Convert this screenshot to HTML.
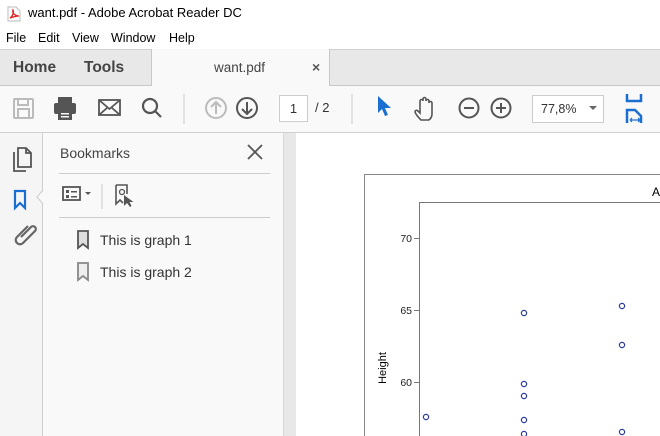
<!DOCTYPE html>
<html><head><style>
*{margin:0;padding:0;box-sizing:border-box}
html,body{width:660px;height:436px;overflow:hidden}
body{font-family:"Liberation Sans",sans-serif;background:#fff;position:relative}
.a{position:absolute}
</style></head><body>
<div class="a" style="left:0;top:0;width:660px;height:28px;background:#fff"></div>
<svg class="a" style="left:7px;top:6px" width="14" height="16"><path d="M1 1h8l4 4v10H1z" fill="#fff" stroke="#bbb"/><path d="M3 12c3-2 4-6 3-8c-1 3 2 6 6 6c-3 0-6 1-9 2z" fill="none" stroke="#d22" stroke-width="1.3"/></svg>
<div class="a" style="left:28px;top:5px;font-size:13px;color:#000">want.pdf - Adobe Acrobat Reader DC</div>
<div class="a" style="left:6px;top:31px;font-size:12.5px;color:#000">File</div>
<div class="a" style="left:38px;top:31px;font-size:12.5px">Edit</div>
<div class="a" style="left:72px;top:31px;font-size:12.5px">View</div>
<div class="a" style="left:111px;top:31px;font-size:12.5px">Window</div>
<div class="a" style="left:169px;top:31px;font-size:12.5px">Help</div>
<div class="a" style="left:0;top:49px;width:660px;height:37px;background:#e8e8e8;border-top:1px solid #d0d0d0;border-bottom:1px solid #c8c8c8"></div>
<div class="a" style="left:151px;top:49px;width:179px;height:37px;background:#f9f9f9;border-left:1px solid #c8c8c8;border-right:1px solid #c8c8c8"></div>
<div class="a" style="left:13px;top:59px;font-size:15.5px;font-weight:bold;color:#444">Home</div>
<div class="a" style="left:84px;top:59px;font-size:15.5px;font-weight:bold;color:#444">Tools</div>
<div class="a" style="left:214px;top:60px;font-size:13.5px;color:#444">want.pdf</div>
<div class="a" style="left:312px;top:59px;font-size:14px;color:#555;font-weight:bold">×</div>
<div class="a" style="left:0;top:86px;width:660px;height:47px;background:#f9f9f9;border-bottom:1px solid #d0d0d0"></div>
<svg class="a" style="left:0;top:86px" width="660" height="46" fill="none" stroke-width="2">
<g stroke="#bbb"><rect x="14" y="13" width="19" height="19" rx="1"/><rect x="18" y="13" width="10" height="6"/><rect x="18" y="23" width="11" height="9"/></g>
<g fill="#555" stroke="none"><rect x="58" y="11" width="14" height="6"/><rect x="54" y="17" width="22" height="11" rx="2"/><rect x="58" y="24" width="14" height="10"/><rect x="61" y="27" width="8" height="1.5" fill="#f9f9f9"/><rect x="61" y="30" width="8" height="1.5" fill="#f9f9f9"/></g>
<g stroke="#555" stroke-width="1.8"><rect x="99" y="14" width="21" height="15"/><path d="M99 14l10.5 9l10.5-9M99 29l8-7M120 29l-8-7"/></g>
<g stroke="#555" stroke-width="2.2"><circle cx="150" cy="20" r="7"/><path d="M155 25l6 6"/></g>
<path d="M184 8v30" stroke="#ccc" stroke-width="1"/>
<g stroke="#bbb" stroke-width="2"><circle cx="216" cy="22" r="10"/><path d="M216 28v-12M211 21l5-5l5 5"/></g>
<g stroke="#555" stroke-width="2"><circle cx="247" cy="22" r="10"/><path d="M247 16v12M242 23l5 5l5-5"/></g>
<path d="M352 8v30" stroke="#ccc" stroke-width="1"/>
<path d="M378 10l0 17l4-4l3 7l3-1l-3-7l6 0z" fill="#1a6fd0" stroke="none"/>
<path d="M421 34c-2-2-5-5-6-8c0-2 2-2 3-1l2 2v-12a1.5 1.5 0 0 1 3 0v-2a1.5 1.5 0 0 1 3 0v2a1.5 1.5 0 0 1 3 0v2a1.5 1.5 0 0 1 3 0v11c0 3-2 6-4 6z" stroke="#555" stroke-width="1.6"/>
<g stroke="#555" stroke-width="2"><circle cx="469" cy="22" r="9.5"/><path d="M464 22h10"/><circle cx="501" cy="22" r="9.5"/><path d="M496 22h10M501 17v10"/></g>
<g stroke="#1a6fd0" stroke-width="2.5"><path d="M627 8v7h14v-7"/><path d="M627 37v-13h8l6 6v7"/></g>
<path d="M630 34h10M630 34l2-2M630 34l2 2M640 34l-2-2M640 34l-2 2" stroke="#1a6fd0" stroke-width="1.2"/>
</svg>
<div class="a" style="left:279px;top:95px;width:29px;height:27px;background:#fff;border:1px solid #ccc;font-size:13px;text-align:center;line-height:25px;color:#333">1</div>
<div class="a" style="left:315px;top:100px;font-size:13px;color:#333">/ 2</div>
<div class="a" style="left:532px;top:95px;width:72px;height:28px;background:#fff;border:1px solid #ccc;font-size:12.5px;line-height:26px;padding-left:8px;color:#333">77,8%</div>
<div class="a" style="left:589px;top:106px;width:0;height:0;border-left:4px solid transparent;border-right:4px solid transparent;border-top:4px solid #666"></div>
<div class="a" style="left:0;top:133px;width:43px;height:303px;background:#f5f5f5;border-right:1px solid #d0d0d0"></div>
<div class="a" style="left:43px;top:133px;width:241px;height:303px;background:#f9f9f9;border-right:1px solid #d8d8d8"></div>
<div class="a" style="left:284px;top:133px;width:12px;height:303px;background:#e8e8e8"></div>
<svg class="a" style="left:0;top:133px" width="290" height="160" fill="none">
<g stroke="#555" stroke-width="1.8"><path d="M14 19v19h12"/><path d="M18 15h8l5 5v14h-13z"/><path d="M26 15v5h5"/></g>
<path d="M15 58v17l5-5l5 5v-17z" stroke="#1a6fd0" stroke-width="2.2"/>
<path d="M43 57l-6 7l6 7" stroke="#ccc" fill="#f9f9f9"/>
<path d="M28 93l-11 11a4 4 0 0 0 6 6l12-12a2.5 2.5 0 0 0-4-4l-10 10" stroke="#666" stroke-width="2.2"/>
<path d="M248 12l14 14M262 12l-14 14" stroke="#555" stroke-width="1.8"/>
<path d="M59 40.5h211M59 84.5h211" stroke="#ccc"/>
<g stroke="#555" stroke-width="1.8"><rect x="63" y="54" width="17" height="13"/></g>
<g fill="#555"><rect x="66" y="57" width="3" height="3"/><rect x="66" y="62" width="3" height="3"/><rect x="71" y="58" width="6" height="1.5"/><rect x="71" y="63" width="6" height="1.5"/><path d="M85 59h6l-3 3z"/></g>
<path d="M102 51v25" stroke="#ccc"/>
<path d="M116 52v19l4-4l3 3" stroke="#555" stroke-width="1.6"/><path d="M116 52h11v9" stroke="#555" stroke-width="1.6"/>
<circle cx="122" cy="59" r="2.5" stroke="#555" stroke-width="1.3"/>
<path d="M124 62l0 11l3-3l3 4l1.5-1l-2-4l4 0z" fill="#555"/>
<path d="M78 98v17l5-4l5 4v-17z" fill="#ddd" stroke="#555" stroke-width="1.8"/>
<path d="M78 130v17l5-4l5 4v-17z" fill="#eee" stroke="#888" stroke-width="1.8"/>
</svg>
<div class="a" style="left:60px;top:145px;font-size:14px;color:#444">Bookmarks</div>
<div class="a" style="left:100px;top:232px;font-size:14px;color:#333">This is graph 1</div>
<div class="a" style="left:100px;top:264px;font-size:14px;color:#333">This is graph 2</div>
<svg class="a" style="left:296px;top:133px" width="364" height="303">
<rect x="68.5" y="41.5" width="400" height="300" fill="none" stroke="#888"/>
<rect x="123.5" y="69.5" width="400" height="300" fill="none" stroke="#777"/>
<g stroke="#777"><path d="M118 105.5h5M118 177.5h5M118 249.5h5"/></g>
<g font-size="10.5" fill="#222" text-anchor="end" font-family="Liberation Sans"><text x="116" y="109">70</text><text x="116" y="181">65</text><text x="116" y="253">60</text></g>
<text transform="translate(90 235) rotate(-90)" text-anchor="middle" font-size="11" fill="#000" font-family="Liberation Sans">Height</text>
<text x="356" y="63" font-size="12" fill="#000" font-family="Liberation Sans">A</text>
<g fill="none" stroke="#2a3aa0" stroke-width="1.2"><circle cx="130" cy="284" r="2.6"/><circle cx="228" cy="180" r="2.6"/><circle cx="228" cy="251" r="2.6"/><circle cx="228" cy="263" r="2.6"/><circle cx="228" cy="287" r="2.6"/><circle cx="228" cy="301" r="2.6"/><circle cx="326" cy="173" r="2.6"/><circle cx="326" cy="212" r="2.6"/><circle cx="326" cy="299" r="2.6"/></g>
</svg>
</body></html>
